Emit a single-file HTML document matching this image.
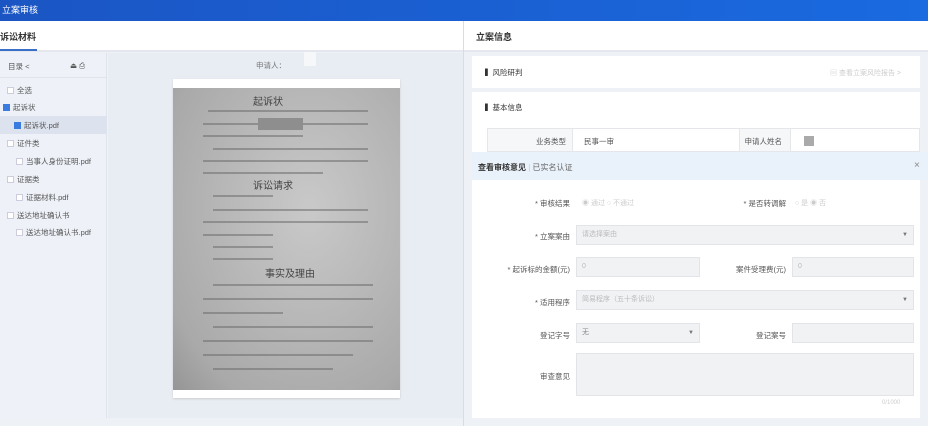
<!DOCTYPE html>
<html><head><meta charset="utf-8"><style>
*{margin:0;padding:0;box-sizing:border-box}
body{width:928px;height:426px;overflow:hidden;background:#eef1f5;font-family:"Liberation Sans","Noto Sans CJK SC",sans-serif;font-size:8px;color:#666;position:relative}
.a{position:absolute}
.top{left:0;top:0;width:928px;height:21px;background:linear-gradient(90deg,#1b55c4,#1a6ae0);color:#fff;font-size:9px;line-height:21px;padding-left:2px}
.hdr{top:21px;left:0;width:928px;height:31px;background:#fff;border-bottom:2px solid #e4e8ee}
.t{font-size:9px;color:#333;font-weight:bold}
.side{left:0;top:53px;width:107px;height:365px;background:#eef2f8;border-right:1px solid #dfe4ec}
.view{left:108px;top:53px;width:355px;height:365px;background:#e8edf4}
.cb{display:inline-block;width:7px;height:7px;background:#fff;border:1px solid #ccd;vertical-align:-1px;margin-right:3px}
.cb.on{background:#3a7be0;border-color:#3a7be0}
.it{position:absolute;font-size:7.5px;color:#555}
.card{background:#fff}
.lbl{position:absolute;font-size:7.5px;color:#555;text-align:right}
.inp{position:absolute;background:#f1f2f4;border:1px solid #e2e4e8;height:20px;color:#bbb;font-size:7px;line-height:18px;padding-left:5px}
.arr{position:absolute;right:5px;top:0;color:#777;font-size:6px}
.doc{left:173px;top:79px;width:227px;height:319px;background:#fff;box-shadow:0 1px 2px #ccc}
.img{left:0;top:9px;width:227px;height:302px;background:radial-gradient(ellipse at 60% 40%,#c9c9c9,#a9a9a9 80%,#959595)}
.ln{position:absolute;height:2px;background:#6e6e6e;opacity:.55}
</style></head><body>
<div class="a top">立案审核</div>
<div class="a hdr"></div>
<div class="a t" style="left:0;top:30px">诉讼材料</div>
<div class="a" style="left:0;top:49px;width:37px;height:2px;background:#3a6fc8"></div>
<div class="a t" style="left:476px;top:30px">立案信息</div>
<div class="a" style="left:463px;top:21px;width:1px;height:405px;background:#d8dde5"></div>
<div class="a side"></div>
<div class="it" style="left:8px;top:61px">目录 &lt;</div>
<div class="it" style="left:70px;top:61px">⏏ ⎙</div>
<div class="a" style="left:0;top:77px;width:107px;height:1px;background:#e0e4ea"></div>
<div class="it" style="left:7px;top:85px"><span class="cb"></span>全选</div>
<div class="it" style="left:3px;top:102px"><span class="cb on"></span>起诉状</div>
<div class="a" style="left:0;top:116px;width:107px;height:18px;background:#dde3ee"></div>
<div class="it" style="left:14px;top:120px"><span class="cb on"></span>起诉状.pdf</div>
<div class="it" style="left:7px;top:138px"><span class="cb"></span>证件类</div>
<div class="it" style="left:16px;top:156px"><span class="cb"></span>当事人身份证明.pdf</div>
<div class="it" style="left:7px;top:174px"><span class="cb"></span>证据类</div>
<div class="it" style="left:16px;top:192px"><span class="cb"></span>证据材料.pdf</div>
<div class="it" style="left:7px;top:210px"><span class="cb"></span>送达地址确认书</div>
<div class="it" style="left:16px;top:227px"><span class="cb"></span>送达地址确认书.pdf</div>
<div class="a view"></div>
<div class="it" style="left:256px;top:60px;color:#777">申请人：</div>
<div class="a" style="left:304px;top:52px;width:12px;height:14px;background:#f6f7f9"></div>
<div class="a doc"><div class="a img">
<div class="a" style="left:80px;top:5px;font-size:10px;color:#444">起诉状</div>
<div class="ln" style="left:35px;top:22px;width:160px"></div>
<div class="ln" style="left:30px;top:35px;width:165px"></div>
<div class="a" style="left:85px;top:30px;width:45px;height:12px;background:#8e8e8e"></div>
<div class="ln" style="left:30px;top:47px;width:100px"></div>
<div class="ln" style="left:40px;top:60px;width:155px"></div>
<div class="ln" style="left:30px;top:72px;width:165px"></div>
<div class="ln" style="left:30px;top:84px;width:120px"></div>
<div class="a" style="left:80px;top:89px;font-size:10px;color:#444">诉讼请求</div>
<div class="ln" style="left:40px;top:107px;width:60px"></div>
<div class="ln" style="left:40px;top:121px;width:155px"></div>
<div class="ln" style="left:30px;top:133px;width:165px"></div>
<div class="ln" style="left:30px;top:146px;width:70px"></div>
<div class="ln" style="left:40px;top:158px;width:60px"></div>
<div class="ln" style="left:40px;top:170px;width:60px"></div>
<div class="a" style="left:92px;top:177px;font-size:10px;color:#444">事实及理由</div>
<div class="ln" style="left:40px;top:196px;width:160px"></div>
<div class="ln" style="left:30px;top:210px;width:170px"></div>
<div class="ln" style="left:30px;top:224px;width:80px"></div>
<div class="ln" style="left:40px;top:238px;width:160px"></div>
<div class="ln" style="left:30px;top:252px;width:170px"></div>
<div class="ln" style="left:30px;top:266px;width:150px"></div>
<div class="ln" style="left:40px;top:280px;width:120px"></div>
</div></div>
<div class="a card" style="left:472px;top:56px;width:448px;height:32px"></div>
<div class="it" style="left:485px;top:67px;color:#333">▍风险研判</div>
<div class="it" style="left:830px;top:68px;color:#ccc;font-size:7px">▤ 查看立案风险报告 &gt;</div>
<div class="a card" style="left:472px;top:92px;width:448px;height:60px"></div>
<div class="it" style="left:485px;top:102px;color:#333">▍基本信息</div>
<div class="a" style="left:487px;top:128px;width:433px;height:24px;border:1px solid #e4e6ea;background:#f6f7f9"></div>
<div class="a" style="left:572px;top:128px;width:168px;height:24px;background:#fff;border:1px solid #e4e6ea"></div>
<div class="a" style="left:790px;top:128px;width:130px;height:24px;background:#fff;border:1px solid #e4e6ea"></div>
<div class="lbl" style="left:500px;top:136px;width:66px">业务类型</div>
<div class="it" style="left:584px;top:136px">民事一审</div>
<div class="lbl" style="left:700px;top:136px;width:82px">申请人姓名</div>
<div class="a" style="left:804px;top:136px;width:10px;height:10px;background:#aaa"></div>
<div class="a" style="left:472px;top:152px;width:456px;height:28px;background:#e9f1fa"></div>
<div class="it" style="left:478px;top:162px;color:#333;font-size:8px;font-weight:bold">查看审核意见 <span style="color:#ccc;font-weight:normal">|</span> <span style="font-weight:normal;color:#666">已实名认证</span></div>
<div class="it" style="left:914px;top:160px;font-size:10px;color:#888">×</div>
<div class="a" style="left:472px;top:180px;width:448px;height:238px;background:#fff"></div>
<div class="lbl" style="left:500px;top:198px;width:70px">* 审核结果</div>
<div class="it" style="left:582px;top:198px;color:#ccc;font-size:7px">◉ 通过 ○ 不通过</div>
<div class="lbl" style="left:700px;top:198px;width:86px">* 是否转调解</div>
<div class="it" style="left:795px;top:198px;color:#ccc;font-size:7px">○ 是 ◉ 否</div>
<div class="lbl" style="left:500px;top:231px;width:70px">* 立案案由</div>
<div class="inp" style="left:576px;top:225px;width:338px">请选择案由<span class="arr">▼</span></div>
<div class="lbl" style="left:490px;top:264px;width:80px">* 起诉标的金额(元)</div>
<div class="inp" style="left:576px;top:257px;width:124px">0</div>
<div class="lbl" style="left:710px;top:264px;width:76px">案件受理费(元)</div>
<div class="inp" style="left:792px;top:257px;width:122px">0</div>
<div class="lbl" style="left:500px;top:297px;width:70px">* 适用程序</div>
<div class="inp" style="left:576px;top:290px;width:338px">简易程序（五十条诉讼）<span class="arr">▼</span></div>
<div class="lbl" style="left:500px;top:330px;width:70px">登记字号</div>
<div class="inp" style="left:576px;top:323px;width:124px;color:#888">无<span class="arr">▼</span></div>
<div class="lbl" style="left:710px;top:330px;width:76px">登记案号</div>
<div class="inp" style="left:792px;top:323px;width:122px"></div>
<div class="lbl" style="left:500px;top:371px;width:70px">审查意见</div>
<div class="inp" style="left:576px;top:353px;width:338px;height:43px"></div>
<div class="it" style="left:882px;top:400px;color:#ccc;font-size:6px">0/1000</div>
</body></html>
